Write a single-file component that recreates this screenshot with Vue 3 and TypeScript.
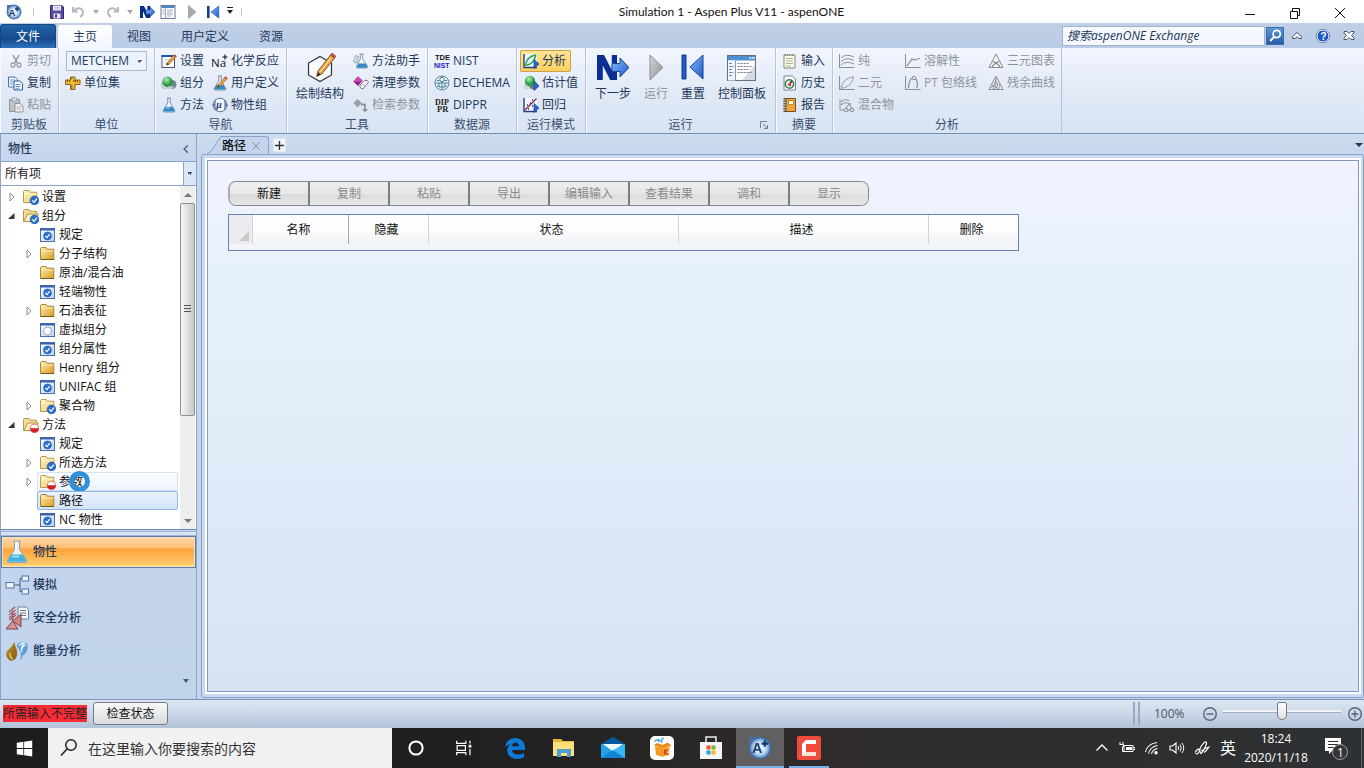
<script setup lang="ts">
import { ref } from 'vue'

interface Command { icon: string; label: string; disabled?: boolean; active?: boolean }
interface Group {
  id: string
  title: string
  large?: Command[]
  columns?: Command[][]
  units?: boolean
  launcher?: boolean
}
interface TreeNode { level: number; icon: string; label: string; arrow?: 'open' | 'closed'; state?: 'hover' | 'selected'; busy?: boolean }

const okMark = '<circle cx="11.5" cy="11.5" r="4.4" fill="#2a6fd0" stroke="#1a4fa0" stroke-width=".6"/><path d="M9.3 11.4l1.7 1.9 2.9-3.7" fill="none" stroke="#fff" stroke-width="1.3"/>'
const redMark = '<circle cx="11.5" cy="11.5" r="4.3" fill="#fff" stroke="#b33" stroke-width=".6"/><path d="M7.2 11.3h8.6a4.3 4.3 0 0 1-8.6 0z" fill="#d81e1e"/>'
const folderShape = '<path d="M.5 13.5v-11l.8-1H6l1.2 1.7h6.6v10.300z" fill="url(#gFolder)" stroke="#a07a2c" stroke-width=".9"/><path d="M1 5h12.500" stroke="#fff3c4" stroke-width=".8"/><path d="M1 13.500h13" stroke="#6d5520"/>'
const openFolder = '<path d="M.5 13.500v-11l.8-1H6l1.200 1.700h6.300v10z" fill="#f3dc93" stroke="#b08f45" stroke-width=".9"/><path d="M1 13.500L4.500 6h11L13 13.500z" fill="#fbeeb8" stroke="#b08f45" stroke-width=".9"/>'
const paleFolder = '<path d="M.5 13.500v-11l.8-1H6l1.200 1.700h6.600v10.300z" fill="url(#gPale)" stroke="#b08f45" stroke-width=".9"/><path d="M1 5h12.500" stroke="#fffbe0" stroke-width=".8"/>'
const sheet = '<rect x=".5" y="1.500" width="14" height="13" fill="url(#gSheet)" stroke="#4a70b0"/><path d="M0 2.500h15" stroke="#3a5fae" stroke-width="2"/>'
const aspen = '<path d="M1 1h7v7H1z" fill="#3e78b8"/><circle cx="8" cy="8" r="7" fill="url(#gAspen)" stroke="#3d6ea8" stroke-width="1"/><text x="2.6" y="11.6" font-family="Liberation Sans, sans-serif" font-size="9.5" font-weight="bold" fill="#143c72">A</text><path d="M9 5h4.4M11.2 2.8v4.4" stroke="#143c72" stroke-width="1.5"/>'
const flask = '<path d="M6 1h4M6.8 1v5L2.2 13.4q-.6 1.6 1 1.6h9.6q1.6 0 1-1.6L9.2 6V1" fill="#f3f8fc" stroke="#72879c" stroke-width=".9"/><path d="M4.7 9.8h6.6l2.2 3.8q.4 1-.8 1H3.3q-1.2 0-.8-1z" fill="#2f88c6"/><path d="M5 11h4" stroke="#9bd5f1"/>'
const pencil = '<path d="M6.3 9.8L13.4 1.6l2 1.7-7.2 8-2.7 1z" fill="#eda13b" stroke="#8d5622" stroke-width=".6"/><path d="M13.4 1.6l2 1.7-1 1.1-2-1.7z" fill="#c6534b"/><path d="M5.5 12.3l.8-2.5 1.9 1.5z" fill="#473525"/>'
const axes = '<path d="M.5 1v13.500H15.500" fill="none" stroke="#8b9097" stroke-width="1.1"/>'
const playMark = '<path d="M11 6.5l5 4.5-5 4.5z" fill="#2866d2" stroke="#173e93" stroke-width=".7"/>'
const nextShape = '<path d="M1 2h4l3.4 7V2h2.8v12h-4L4 7.2V14H1z" fill="#092d85"/><path d="M7 6h4.3V3.2L16 8l-4.7 4.8V10H7z" fill="url(#gBlue)" stroke="#194a9f" stroke-width=".6"/>'
const panelShape = '<rect x="1" y="1.5" width="14" height="13" fill="#fff" stroke="#697b91"/><path d="M1.5 3h13" stroke="#4e86c7" stroke-width="2"/><path d="M5.5 4v10" stroke="#9ba9bb"/><path d="M2.5 6h2M2.5 8h2M2.5 10h2M7 6h6M7 8h5M7 10h6M7 12h4" stroke="#718098" stroke-width=".7"/>'

const icons: Record<string, string> = {
  aspen, flask,
  next: nextShape,
  panel: panelShape,
  save: '<path d="M1.5 1.5h11l2 1.5v11.5h-13z" fill="#5946a0" stroke="#33277a"/><path d="M4 1.5h8v5H4z" fill="#fff"/><path d="M5 3.2h6M5 5h6" stroke="#8d88bd" stroke-width=".7"/><path d="M4.5 9.5h7v5h-7z" fill="#e5e3f1"/><path d="M6 10.5h2v3H6z" fill="#473984"/>',
  undo: '<path d="M3 3v4.500h4.500M3.500 7Q8 2.500 12 5.500q3 4-2 7.500" fill="none" stroke="#b1b8c3" stroke-width="2"/>',
  redo: '<path d="M13 3v4.500H8.500M12.500 7Q8 2.500 4 5.500q-3 4 2 7.500" fill="none" stroke="#b7bac0" stroke-width="2"/>',
  play: '<path d="M4.500 1.500l7.500 6.500-7.500 6.500z" fill="#a8abae" stroke="#888c90" stroke-width=".6"/>',
  reset: '<path d="M2 2h2.6v12H2z" fill="#123b9c"/><path d="M13.8 2v12L6 8z" fill="url(#gBlue)" stroke="#1b49a1" stroke-width=".6"/>',
  cut: '<path d="M5 2l4.3 8M11 2L6.7 10" stroke="#888c92" stroke-width="1.3"/><circle cx="5" cy="12" r="2" fill="none" stroke="#9b9fa5" stroke-width="1.3"/><circle cx="11" cy="12" r="2" fill="none" stroke="#9b9fa5" stroke-width="1.3"/>',
  copy: '<path d="M.5 2H7l2.500 2.500V12h-9z" fill="#eef5ff" stroke="#4b72aa"/><path d="M2 5h5M2 7h5M2 9h3" stroke="#5f89c1" stroke-width=".8"/><path d="M6 6h5.800L14.500 8.600V15H6z" fill="#f7fbff" stroke="#315c9b"/><path d="M7.500 9.500h5M7.500 11.500h5M7.500 13.300h4" stroke="#4775b8" stroke-width=".8"/>',
  paste: '<path d="M1.5 2.5h10v12h-10z" fill="#bfc2c6" stroke="#92969b"/><path d="M4 1h5v3H4z" fill="#e5e7e9" stroke="#8f9398" stroke-width=".8"/><path d="M7 6.5h5l3 2.6V15H7z" fill="#eceef0" stroke="#92969b"/><path d="M8.5 10h4.6M8.5 12h4.6" stroke="#a7abb0" stroke-width=".8"/>',
  units: '<path d="M.5 5h5V2h4.500v3h5v4.500h-5v5H5.500v-5h-5z" fill="#f1b933" stroke="#8b6721"/><path d="M2.500 5v2M4.500 5v2M10.500 5v2M12.500 5v2M5.500 11h2M5.500 13h2M5.500 3.500h2M8 6h2" stroke="#694811" stroke-width=".9"/>',
  setup: '<rect x="1" y="2.500" width="12.500" height="12" fill="#fff" stroke="#45536b"/><path d="M.5 3h13.500" stroke="#1a57a7" stroke-width="2"/><path d="M3.5 7h6M3.5 10h3" stroke="#a6b5c7"/>' + pencil,
  components: '<circle cx="11" cy="9.500" r="4.500" fill="#75838f"/><circle cx="4" cy="10" r="3.600" fill="#d7dce2" stroke="#8d98a2" stroke-width=".5"/><circle cx="6.500" cy="6.800" r="5.200" fill="url(#gGreen)"/><path d="M7.500 11q3.500-.5 5.500 1-2 3-6 2z" fill="#bcc6cf"/>',
  sodium: '<text x="-1" y="14" font-family="Open Sans, sans-serif" font-size="11.5" fill="#111">Na</text><path d="M13 1.500v5M10.500 4h5" stroke="#111" stroke-width="1.1"/>',
  custom: flask + pencil,
  props: '<circle cx="8" cy="8" r="6.800" fill="#f4f8fd" stroke="#53719d"/><path d="M3 3v10M0 8h3M13 3v10M13 8h3" stroke="#47689b" stroke-width="1.1"/><text x="4.3" y="11" font-family="Liberation Serif, serif" font-style="italic" font-weight="bold" font-size="10" fill="#263f73">μ</text>',
  draw: '<path d="M16 4.500l11.500 6.500v12L16 29.500 4.500 23V11z" fill="#fafcff" stroke="#2e3136" stroke-width="1.2"/><path d="M14 19L26.5 3l4 3-12.8 16-5 2.4z" fill="#f2a846" stroke="#7a512e"/><path d="M26.5 3l1.7-1.8 3.5 2.8L30.5 6z" fill="#cf5a4a" stroke="#9b4038"/><path d="M12.7 24.4l1.3-4.2 2.8 2.2z" fill="#38312a"/><path d="M16 20L27 6" stroke="#ffe1a0" stroke-width="1.2"/>',
  assistant: '<path d="M.5 9L2.500 2.500l3 1-1.500 6.500z" fill="#d7dde4" stroke="#8994a4" stroke-width=".7"/><path d="M6.500 1h4M7.300 1v5L3.500 13q-.5 2 1 2h9q1.500 0 1-2L9.700 6V1" fill="#edf5fb" stroke="#70849b" stroke-width=".8"/><path d="M5.400 10.500h7.300l1.300 3q.2 1.200-1 1.200H5q-1.200 0-.9-1.200z" fill="#318ac4"/>',
  clean: '<path d="M.3 6.500L5 1.500l4.500 4-4.500 5.500z" fill="#8c1b80"/><path d="M5 1.500L9.500 5.500 5 7 .3 6.500z" fill="#cf4ab8"/><path d="M7 10l4.7-4.6q3-.8 3.8 2L10.400 13.500q-3.800 1-3.400-3.500z" fill="#f5f5fa" stroke="#74678f" stroke-width=".9"/><path d="M8.6 8.4l3.2 3" stroke="#87799c" stroke-width=".7"/>',
  retrieve: '<path d="M.5 6L4.500 2l4.500 4-4.500 4.500z" fill="#9da0a4"/><path d="M8 7.500h4v5" fill="none" stroke="#909398" stroke-width="1.8"/><path d="M9 12h6L12 15.500z" fill="#909398"/>',
  nist: '<text x="1" y="7" font-family="Liberation Sans, sans-serif" font-size="7.500" font-weight="bold" fill="#161616">TDE</text><text x="0" y="14.500" font-family="Liberation Sans, sans-serif" font-size="6.700" font-weight="bold" fill="#1717c5">NIST</text>',
  dechema: '<circle cx="8" cy="8" r="7" fill="#edf5fa" stroke="#467d9b"/><circle cx="8" cy="4.5" r="2.2" fill="none" stroke="#467d9b"/><path d="M2 8h12M5 8v4h6V8M2.7 5.5h3M10.3 5.5h3M3 11h2M11 11h2M8 7v7" fill="none" stroke="#467d9b"/>',
  dippr: '<text x="1" y="7.5" font-family="Liberation Serif, serif" font-size="8" font-weight="bold" fill="#222">DIP</text><text x="3" y="15" font-family="Liberation Serif, serif" font-size="8.5" font-weight="bold" fill="#222">PR</text>',
  analysis: '<rect x="1" y="1" width="13" height="13" fill="#eef6fb"/><path d="M1 1v13.500H14" fill="none" stroke="#293f82" stroke-width="1.4"/><path d="M2.500 12.500Q4 3 13 2M2.500 12.500q8-1 10.500-10.500" fill="none" stroke="#2ba64a" stroke-width="1.4"/>' + playMark,
  estimate: '<circle cx="4.500" cy="11" r="3.600" fill="#cdd3d9"/><circle cx="10.500" cy="10.500" r="4" fill="#6c7d87"/><circle cx="7" cy="6" r="5.200" fill="url(#gGreen)"/>' + playMark,
  regression: '<rect x="1" y="1" width="13" height="13" fill="#f4f6fb"/><path d="M1 1v13.500H14" fill="none" stroke="#293f82" stroke-width="1.4"/><path d="M2 13L13.500 1.500" stroke="#7b245c" stroke-width="1.3"/><path d="M4 8h1M7 6h1M9 3h1M5 12h1M9 9h1" stroke="#2d2450" stroke-width="1.4"/>' + playMark,
  bigNext: '<path d="M0 3h7l7.8 15V3H20v25h-6.8L5.8 13.5V28H0z" fill="#082f91"/><path d="M15 11.5h8V6l9 9.5-9 9.5v-5.5h-8z" fill="url(#gBlue)" stroke="#1c4b9c"/>',
  bigPlay: '<path d="M10 3l13 12.5L10 28z" fill="url(#gGray)" stroke="#8b8f93"/>',
  bigReset: '<path d="M5 3h4v24H5z" fill="#2159c8" stroke="#123b91"/><path d="M26 3v24L13 15z" fill="url(#gBlue)" stroke="#163f99"/>',
  bigPanel: '<rect x="1.500" y="3.500" width="28" height="25" fill="#fff" stroke="#66717f"/><path d="M2 4h27v4.500H2z" fill="#4d8fd3"/><path d="M23 6h1.500M25.500 6H27M27.500 6H29" stroke="#fff" stroke-width="1.500"/><path d="M2 8.500h7v20H2z" fill="#eef5fc"/><path d="M9.5 8.500v20" stroke="#8e9bab"/><path d="M29 13v15H16z" fill="#d5dae1"/><path d="M3.500 11.500h3M3.500 14.500h4M3.500 17.500h2M3.500 20.500h4M3.500 23.500h3" stroke="#2d6099" stroke-dasharray="2 1"/><path d="M11.500 11.500h12M11.500 14.500h15M11.500 17.500h12M11.500 20.500h14" stroke="#727d8b" stroke-dasharray="2 1"/>',
  input: '<path d="M2 2h11v13H2z" fill="#fffef0" stroke="#7d8b70"/><path d="M3 1v2M5.5 1v2M8 1v2M10.5 1v2" stroke="#6e886f"/><path d="M4 5.5h7M4 8h7M4 10.5h7M4 13h5" stroke="#9baa85" stroke-width=".9"/>',
  history: '<path d="M2 1h8.500l3 3v11H2z" fill="#fff" stroke="#748297"/><circle cx="7.500" cy="9" r="4.200" fill="#e7eee8" stroke="#35864e" stroke-width="1.6"/><path d="M7.500 9l2.500-3" fill="none" stroke="#222" stroke-width="1.300"/><path d="M6 9.500L8.500 8v3z" fill="#d63a2a" stroke="#d63a2a"/>',
  report: '<path d="M2 1.500h11.500v13H2z" fill="#f1a434" stroke="#755026"/><path d="M1.500 1.500h3v13h-3z" fill="#58544f"/><path d="M1 3h2.500M1 5.500h2.500M1 8h2.500M1 10.500h2.500M1 13h2.500" stroke="#f2f2f2"/><path d="M6.5 3.5h5v4h-5z" fill="#fff7db" stroke="#986520" stroke-width=".6"/>',
  pure: axes + '<path d="M2 5q5-5 13-1M2 8.500q5-5 13-1M2 12q5-5 13-1" fill="none" stroke="#8b9097"/>',
  binary: axes + '<path d="M2 13.500Q3 4 14.500 1.500 13 12 2 13.500z" fill="none" stroke="#999da2"/>',
  mixture: '<path d="M1 2v11h4M2 5q4-4 8-1M2 8q4-4 8-1" fill="none" stroke="#999da2" stroke-width="1.1"/><circle cx="7" cy="13" r="1.8" fill="none" stroke="#85898e"/><circle cx="13" cy="13" r="1.8" fill="none" stroke="#85898e"/><path d="M7 11L11 6v3l2 2M9 13h2" fill="none" stroke="#85898e"/>',
  solubility: axes + '<path d="M2 13l5-7q2 .5 3 1 2-1.500 5-1.500" fill="none" stroke="#85898e" stroke-width="1.2"/>',
  envelope: axes + '<path d="M3.500 13Q4 3 8.500 2.500 13.500 3.500 12 13" fill="none" stroke="#858d87" stroke-width="1.2"/><circle cx="9" cy="3" r="1.7" fill="#eef2f8" stroke="#858d87"/>',
  ternary: '<path d="M8 1L15 14.5H1z" fill="#f1f3f5" stroke="#898e94"/><path d="M4.8 8.5q3 2 6.4 0M4 14q4-7 8 0" fill="none" stroke="#7c8281" stroke-width="1.2"/>',
  residue: '<path d="M8 1L15 14.5H1z" fill="#f1f3f5" stroke="#898e94"/><path d="M3 13q4-2 5-10M5 14q4-4 3-9M7 14q4-4 2-7M10 14q3-2 1-5M4 10l7 4" fill="none" stroke="#898e94"/>',
  folder: folderShape,
  folderOk: paleFolder + okMark,
  openOk: openFolder + okMark,
  openMissing: openFolder + redMark,
  folderMissing: paleFolder + redMark,
  sheetOk: sheet + '<circle cx="7.500" cy="8.900" r="4" fill="#2972cf" stroke="#1d539f" stroke-width=".5"/><path d="M5.400 8.800l1.600 1.800 2.700-3.400" fill="none" stroke="#fff" stroke-width="1.2"/>',
  sheetEmpty: sheet + '<circle cx="7.500" cy="9" r="4" fill="#fff" stroke="#9aa8ba"/>',
  search: '<circle cx="9.7" cy="6" r="3.6" fill="none" stroke="#fff" stroke-width="1.7"/><path d="M7 8.8L3.2 13" stroke="#fff" stroke-width="2"/>',
  help: '<circle cx="8" cy="8" r="6" fill="#1959c8" stroke="#fff"/><circle cx="8" cy="8" r="6.8" fill="none" stroke="#526c9b" stroke-width=".7"/><text x="5.3" y="12" font-family="Liberation Sans, sans-serif" font-size="10.5" font-weight="bold" fill="#fff">?</text>',
  closeDoc: '<path d="M3 3.500h3L8 5.500l2-2h3V5l-2.500 2.500L13 10v1.500h-3l-2-2-2 2H3V10l2.500-2.500L3 5z" fill="#fff" stroke="#46536a"/>',
  collapse: '<path d="M3.5 10.5V8.7L8 4.5l4.5 4.2v1.8H10L8 8.8l-2 1.7z" fill="#fff" stroke="#46536a"/>',
  navProps: '<path d="M8 1h8M9.5 1.5v8L2.5 20q-1 2.5 1.3 2.5h16.4q2.3 0 1.3-2.5l-7-10.5v-8" fill="#e9f1f6" stroke="#92a1ab"/><path d="M6.4 14.5h11.2l3.2 5.3q.8 2-1.2 2H4.4q-2 0-1.2-2z" fill="#42b4dc"/><path d="M7 16.5h7" stroke="#b8edfb" stroke-width="1.4"/><path d="M11 3v8" stroke="#fff" stroke-width="1.4"/>',
  navSim: '<path d="M9 12h6M18 5.500h-3v13h3" fill="none" stroke="#47617e"/><rect x="1" y="9.500" width="8" height="5.500" fill="#eef3fd" stroke="#56779f"/><rect x="17" y="3" width="6.500" height="5" fill="#eef3fd" stroke="#56779f"/><rect x="17" y="16" width="6.500" height="5" fill="#eef3fd" stroke="#56779f"/>',
  navSafety: '<path d="M13 1h8l2.5 2.5V13H13z" fill="#f3f7fb" stroke="#718095"/><path d="M15 4.5h6M15 7h6M15 9.5h6" stroke="#64758c"/><path d="M7.500 15L16 8v13z" fill="#ce8585" stroke="#85474c"/><path d="M7.500 15L13 23H1z" fill="#d29496" stroke="#85474c"/><path d="M7.500 15V5M4 9l6.500-5M4 12l6.500-5M4 6l6-5M4.500 14l6.500-5" stroke="#a35055" stroke-width="1.2"/>',
  navEnergy: '<path d="M9.500 3q.5 4 2 7 1.500 5-.5 9-3 4-7 2-5-4-1.500-9.500Q7 8 9.500 3z" fill="url(#gGold)"/><path d="M5 14q0 5 3 6" fill="none" stroke="#eed075" stroke-width="1.300"/><path d="M12 7q0-4 5-4 5 0 5.500 3 1 7-5 11 0 3-2.500 4 2-5 0-9-2-3-3-5z" fill="#5c9ed5"/><path d="M14 7q1-3 5-3-4 5-2 9M17 10q1-4 4-4" fill="none" stroke="#d9f2ff" stroke-width="1.400"/>',
  windows: '<path d="M1 3.500L9.500 2.300V10.500H1zM10.500 2.200L21 .7v9.800H10.500zM1 11.500h8.500v8.200L1 18.500zM10.500 11.500H21v9.800l-10.500-1.500z" fill="#fff"/>',
  lens: '<circle cx="14" cy="8" r="5.200" fill="none" stroke="#222" stroke-width="1.500"/><path d="M10 12l-6 6.500" stroke="#222" stroke-width="1.600"/>',
  cortana: '<circle cx="12" cy="12" r="7.200" fill="none" stroke="#fff" stroke-width="2.200"/>',
  taskview: '<path d="M4 4v3h10V4M4 20v-3h10v3M4.500 9.500h9v5h-9zM18.500 4v3M18.500 13v7" fill="none" stroke="#fff" stroke-width="1.300"/><path d="M17 8.500h3v3h-3z" fill="#fff"/>',
  edge: '<path d="M2 11Q4 2 12 2q9.500.5 10 9.800V14H9q.5 4.500 6 4.600 3.500 0 6-1.500v4.200Q18 23 13.500 23 4.500 22 4 14q.5-4 4-6-3 .5-6 3zM9 10.300h7q-.1-3.700-3.300-3.700T9 10.300z" fill="#0b7ad8"/>',
  explorer: '<path d="M1 3h8l2 2h11v15H1z" fill="#e7b53a"/><path d="M1 6h21v14H1z" fill="#ffdf7b"/><path d="M5 13h14v8h-4v-4H9v4H5z" fill="#4c9fce"/>',
  mail: '<path d="M0 8l12-7 12 7z" fill="#0759a0"/><path d="M0 8h24v14H0z" fill="#23a2e8"/><path d="M2 8h20l-10 7.500z" fill="#f3f8fc"/><path d="M0 22l12-8 12 8z" fill="#1285d2"/><path d="M24 8v14l-12-8z" fill="#39b6f5"/>',
  box: '<rect width="24" height="24" rx="5" fill="#fff"/><path d="M5 10l8 1.500V21l-7-2z" fill="#f39a21"/><path d="M13 11.500l7-1.500-1 9-6 2z" fill="#fbb448"/><path d="M3.500 9l4-2 5 2 5-2.500 4 3-8.500 2.500z" fill="#ee8b18"/><path d="M14.500 13v6M18 13l-3 3 3 3" fill="none" stroke="#d93f20" stroke-width="1.500"/><path d="M9 5.500q-2-3-4.500 0M12 7q-2-3 1.500-5M10 5.500L8 3" fill="none" stroke="#4aa8de" stroke-width="1.500"/>',
  store: '<path d="M7 7V1h10v6" fill="none" stroke="#eee" stroke-width="1.500"/><path d="M1 6h22v17H1z" fill="#f5f5f5"/><path d="M7.500 9.500h4v4h-4z" fill="#e9502b"/><path d="M12.500 9.500h4v4h-4z" fill="#7eb51f"/><path d="M7.500 14.500h4v4h-4z" fill="#1aa4df"/><path d="M12.500 14.500h4v4h-4z" fill="#f5b51d"/>',
  camtasia: '<rect width="24" height="24" rx="2" fill="#f04c3e"/><path d="M19 4H9L5 8v12h14v-4H9V8h10z" fill="#fff"/><path d="M19 16v4H5l4-4z" fill="#ffe0d9"/>',
  chevron: '<path d="M2.500 10.500L8 5l5.500 5.500" fill="none" stroke="#fff" stroke-width="1.300"/>',
  battery: '<path d="M5 5.500h9v6H5zM14.500 7.500h1.500v2h-1.500" fill="none" stroke="#fff"/><path d="M7 7h6v3H7z" fill="#fff"/><path d="M1 2v2M4 2v2M.5 4.500h4v2h-1v5h3" fill="none" stroke="#fff"/>',
  wifi: '<g fill="none" stroke="#fff" stroke-width="1.100"><path d="M1.500 12Q3 4 13 2.500"/><path d="M4.500 13.500Q6 7 13.500 5.500"/><path d="M7.500 14q1-4.500 6-5.500"/></g><circle cx="12" cy="12.800" r="1.700" fill="#fff"/>',
  speaker: '<path d="M1 6h2.500L7 3v10L3.500 10H1z" fill="none" stroke="#fff" stroke-width="1.100"/><path d="M9 6q1.300 2 0 4M11 4.500q2.500 3.500 0 7M13 3q3.500 5 0 10" fill="none" stroke="#fff"/>',
  pen: '<path d="M7 13.500Q4 10.500 8 5q4-5 4.500-2 0 3-5.500 11M1 12.500q3-5 4.500-2.500-1 5-4 3.500M7.500 11q3.500-3 7.500-4-2.500 4-5 5.500" fill="none" stroke="#fff" stroke-width="1.200"/>',
}

const quick = [
  { icon: 'save', name: '保存', cls: 'w22' },
  { icon: 'undo', name: '撤消', cls: 'w20' },
  { icon: 'caret', name: '撤消列表', cls: 'w16' },
  { icon: 'redo', name: '重做', cls: 'w18' },
  { icon: 'caret', name: '重做列表', cls: 'w16' },
  { icon: 'next', name: '下一步', cls: 'w18' },
  { icon: 'panel', name: '控制面板', cls: 'w24' },
  { icon: 'play', name: '运行', cls: 'w24' },
  { icon: 'reset', name: '重置', cls: 'w18' },
  { icon: 'more', name: '自定义', cls: 'w16' },
]
const tabs = ['主页', '视图', '用户定义', '资源']

const groups: Group[] = [
  { id: 'clipboard', title: '剪贴板', columns: [[{ icon: 'cut', label: '剪切', disabled: true }, { icon: 'copy', label: '复制' }, { icon: 'paste', label: '粘贴', disabled: true }]] },
  { id: 'units', title: '单位', units: true },
  { id: 'navigate', title: '导航', columns: [
    [{ icon: 'setup', label: '设置' }, { icon: 'components', label: '组分' }, { icon: 'flask', label: '方法' }],
    [{ icon: 'sodium', label: '化学反应' }, { icon: 'custom', label: '用户定义' }, { icon: 'props', label: '物性组' }]] },
  { id: 'tools', title: '工具', large: [{ icon: 'draw', label: '绘制结构' }], columns: [
    [{ icon: 'assistant', label: '方法助手' }, { icon: 'clean', label: '清理参数' }, { icon: 'retrieve', label: '检索参数', disabled: true }]] },
  { id: 'source', title: '数据源', columns: [[{ icon: 'nist', label: 'NIST' }, { icon: 'dechema', label: 'DECHEMA' }, { icon: 'dippr', label: 'DIPPR' }]] },
  { id: 'mode', title: '运行模式', columns: [[{ icon: 'analysis', label: '分析', active: true }, { icon: 'estimate', label: '估计值' }, { icon: 'regression', label: '回归' }]] },
  { id: 'run', title: '运行', launcher: true, large: [{ icon: 'bigNext', label: '下一步' }, { icon: 'bigPlay', label: '运行', disabled: true }, { icon: 'bigReset', label: '重置' }, { icon: 'bigPanel', label: '控制面板' }] },
  { id: 'summary', title: '摘要', columns: [[{ icon: 'input', label: '输入' }, { icon: 'history', label: '历史' }, { icon: 'report', label: '报告' }]] },
  { id: 'analyze', title: '分析', columns: [
    [{ icon: 'pure', label: '纯', disabled: true }, { icon: 'binary', label: '二元', disabled: true }, { icon: 'mixture', label: '混合物', disabled: true }],
    [{ icon: 'solubility', label: '溶解性', disabled: true }, { icon: 'envelope', label: 'PT 包络线', disabled: true }],
    [{ icon: 'ternary', label: '三元图表', disabled: true }, { icon: 'residue', label: '残余曲线', disabled: true }]] },
]

const tree: TreeNode[] = [
  { level: 0, icon: 'folderOk', label: '设置', arrow: 'closed' },
  { level: 0, icon: 'openOk', label: '组分', arrow: 'open' },
  { level: 1, icon: 'sheetOk', label: '规定' },
  { level: 1, icon: 'folder', label: '分子结构', arrow: 'closed' },
  { level: 1, icon: 'folder', label: '原油/混合油' },
  { level: 1, icon: 'sheetOk', label: '轻端物性' },
  { level: 1, icon: 'folder', label: '石油表征', arrow: 'closed' },
  { level: 1, icon: 'sheetEmpty', label: '虚拟组分' },
  { level: 1, icon: 'sheetOk', label: '组分属性' },
  { level: 1, icon: 'folder', label: 'Henry 组分' },
  { level: 1, icon: 'sheetOk', label: 'UNIFAC 组' },
  { level: 1, icon: 'folderOk', label: '聚合物', arrow: 'closed' },
  { level: 0, icon: 'openMissing', label: '方法', arrow: 'open' },
  { level: 1, icon: 'sheetOk', label: '规定' },
  { level: 1, icon: 'folderOk', label: '所选方法', arrow: 'closed' },
  { level: 1, icon: 'folderMissing', label: '参数', arrow: 'closed', state: 'hover', busy: true },
  { level: 1, icon: 'folder', label: '路径', state: 'selected' },
  { level: 1, icon: 'sheetOk', label: 'NC 物性' },
]

const environments = [
  { icon: 'navProps', label: '物性', active: true },
  { icon: 'navSim', label: '模拟' },
  { icon: 'navSafety', label: '安全分析' },
  { icon: 'navEnergy', label: '能量分析' },
]
const actions = ['新建', '复制', '粘贴', '导出', '编辑输入', '查看结果', '调和', '显示']
const apps = [
  { icon: 'edge', name: 'Edge' }, { icon: 'explorer', name: '文件资源管理器' }, { icon: 'mail', name: '邮件' },
  { icon: 'box', name: '软件' }, { icon: 'store', name: '应用商店' },
  { icon: 'aspen', name: 'Aspen Plus', state: 'current' }, { icon: 'camtasia', name: '录屏', state: 'open' },
]
const unitSet = ref('METCHEM')
const zoom = ref(50)
</script>

<template>
  <div class="window">
    <svg class="defs" aria-hidden="true">
      <defs>
        <linearGradient id="gFolder" x1="0" y1="0" x2="1" y2="1"><stop offset="0" stop-color="#fff0b0" /><stop offset="1" stop-color="#d99c22" /></linearGradient>
        <linearGradient id="gPale" x1="0" y1="0" x2="1" y2="1"><stop offset="0" stop-color="#fff5c2" /><stop offset="1" stop-color="#ecc970" /></linearGradient>
        <linearGradient id="gSheet" x1="0" y1="0" x2="1" y2="1"><stop offset="0" stop-color="#ffffff" /><stop offset="1" stop-color="#b9d0ef" /></linearGradient>
        <linearGradient id="gBlue" x1="0" y1="0" x2="1" y2="1"><stop offset="0" stop-color="#86c0fa" /><stop offset="1" stop-color="#1d55c9" /></linearGradient>
        <linearGradient id="gGray" x1="0" y1="0" x2="1" y2="1"><stop offset="0" stop-color="#d3d5d8" /><stop offset="1" stop-color="#919599" /></linearGradient>
        <linearGradient id="gGold" x1="0" y1="0" x2="1" y2="1"><stop offset="0" stop-color="#c79b34" /><stop offset="1" stop-color="#7b5410" /></linearGradient>
        <radialGradient id="gGreen" cx=".4" cy=".3"><stop offset="0" stop-color="#aef0ae" /><stop offset="1" stop-color="#279a44" /></radialGradient>
        <radialGradient id="gAspen"><stop offset="0" stop-color="#ffffff" /><stop offset=".55" stop-color="#c9ddf1" /><stop offset="1" stop-color="#4e84c0" /></radialGradient>
      </defs>
    </svg>

    <header class="titlebar">
      <div class="quick">
        <svg class="i16 logo" viewBox="0 0 16 16" v-html="icons.aspen" />
        <i class="qsep" />
        <button v-for="q in quick" :key="q.name" :class="q.cls" :aria-label="q.name">
          <i v-if="q.icon === 'caret'" class="caret pale" />
          <i v-else-if="q.icon === 'more'" class="caret more" />
          <svg v-else class="i16" viewBox="0 0 16 16" v-html="icons[q.icon]" />
        </button>
        <i class="qsep last" />
      </div>
      <h1>Simulation 1 - Aspen Plus V11 - aspenONE</h1>
      <div class="winctl">
        <button aria-label="最小化"><svg viewBox="0 0 12 12"><path d="M1 7.500h10" /></svg></button>
        <button aria-label="还原"><svg viewBox="0 0 12 12"><path d="M1.500 4.500h7v7h-7zM3.500 4.500v-3h7v7h-2" /></svg></button>
        <button aria-label="关闭"><svg viewBox="0 0 12 12"><path d="M1 1l10 10M11 1L1 11" /></svg></button>
      </div>
    </header>

    <nav class="tabs">
      <button class="file">文件</button>
      <button v-for="(t, i) in tabs" :key="t" :class="['tab', { on: i === 0 }]">{{ t }}</button>
      <div class="exchange">
        <input type="text" aria-label="搜索aspenONE Exchange" placeholder="搜索aspenONE Exchange">
        <button class="go" aria-label="搜索"><svg class="i16" viewBox="0 0 16 16" v-html="icons.search" /></button>
        <button class="plain" aria-label="折叠功能区"><svg class="i16" viewBox="0 0 16 16" v-html="icons.collapse" /></button>
        <button class="plain" aria-label="帮助"><svg class="i16" viewBox="0 0 16 16" v-html="icons.help" /></button>
        <button class="plain" aria-label="关闭文档"><svg class="i16" viewBox="0 0 16 16" v-html="icons.closeDoc" /></button>
      </div>
    </nav>

    <section class="ribbon">
      <div v-for="g in groups" :key="g.id" :class="['group', g.id]">
        <div class="gbody">
          <button v-for="c in g.large" :key="c.label" class="large" :disabled="c.disabled">
            <svg viewBox="0 0 32 32" v-html="icons[c.icon]" />
            <span>{{ c.label }}</span>
          </button>
          <div v-if="g.units" class="unitcol">
            <select v-model="unitSet" aria-label="单位集"><option>METCHEM</option></select>
            <button class="cmd"><svg class="i16" viewBox="0 0 16 16" v-html="icons.units" />单位集</button>
          </div>
          <div v-for="(col, ci) in g.columns" :key="ci" class="col">
            <button v-for="c in col" :key="c.label" :class="['cmd', { active: c.active }]" :disabled="c.disabled">
              <svg class="i16" viewBox="0 0 16 16" v-html="icons[c.icon]" />{{ c.label }}
            </button>
          </div>
        </div>
        <div class="gtitle">
          <span>{{ g.title }}</span>
          <button v-if="g.launcher" class="launcher" aria-label="运行设置"><svg viewBox="0 0 8 8"><path d="M.5 7V.5H7M3 3l4 4M7.500 4v3.500H4" /></svg></button>
        </div>
      </div>
    </section>

    <main class="main">
      <aside class="side">
        <div class="sidehead"><h2>物性</h2><button aria-label="折叠"><svg viewBox="0 0 8 8"><path d="M5.500 1l-3 3 3 3" /></svg></button></div>
        <select class="filter" aria-label="筛选"><option>所有项</option></select>
        <div class="treebox">
          <ul class="tree">
            <li v-for="(n, i) in tree" :key="i" :class="'level' + n.level">
              <span class="arrow">
                <svg v-if="n.arrow === 'closed'" viewBox="0 0 10 10"><path d="M3 1l4 4-4 4z" fill="#fff" stroke="#8d8d8d" /></svg>
                <svg v-else-if="n.arrow === 'open'" viewBox="0 0 10 10"><path d="M7.500 2v6H1z" fill="#333" /></svg>
              </span>
              <a href="#" :class="['node', n.state]">
                <svg class="i16" viewBox="0 0 16 16" v-html="icons[n.icon]" />{{ n.label }}
                <span v-if="n.busy" class="busy" />
              </a>
            </li>
          </ul>
          <div class="scroll">
            <span class="sbtn"><i class="up" /></span>
            <span class="thumb"><i /></span>
            <span class="rest" />
            <span class="sbtn"><i class="caret gray" /></span>
          </div>
        </div>
        <div class="splitter" />
        <nav class="envs">
          <button v-for="e in environments" :key="e.label" :class="{ on: e.active }">
            <svg viewBox="0 0 24 24" v-html="icons[e.icon]" />{{ e.label }}
          </button>
          <div class="envmore"><i class="caret" /></div>
        </nav>
      </aside>

      <section class="work">
        <div class="doctabs">
          <svg class="slant" viewBox="0 0 14 18"><path d="M0 18Q4 17 7 11T14 .5V18z" fill="#c3d4ec" /><path d="M0 17.500Q4 16.500 7 11T14 .5" fill="none" stroke="#8ba2c6" /></svg>
          <div class="doctab">路径<button aria-label="关闭"><svg viewBox="0 0 8 8"><path d="M.5.5l7 7M7.500.5l-7 7" /></svg></button></div>
          <button class="plus" aria-label="新选项卡"><svg viewBox="0 0 12 12"><path d="M6 1v10M1 6h10" /></svg></button>
          <i class="caret dark end" />
        </div>
        <div class="frame">
          <div class="page">
            <div class="actions">
              <button v-for="(a, i) in actions" :key="a" :disabled="i > 0">{{ a }}</button>
            </div>
            <table>
              <colgroup><col class="c0"><col class="c1"><col class="c2"><col class="c3"><col class="c3"><col class="c4"></colgroup>
              <thead><tr><th class="corner"><i /></th><th>名称</th><th>隐藏</th><th>状态</th><th>描述</th><th>删除</th></tr></thead>
              <tbody><tr><td colspan="6" /></tr></tbody>
            </table>
          </div>
        </div>
      </section>
    </main>

    <footer class="status">
      <span class="warn">所需输入不完整</span>
      <button class="check">检查状态</button>
      <span class="grip" />
      <span class="pct">100%</span>
      <button class="zb" aria-label="缩小"><svg viewBox="0 0 16 16"><circle cx="8" cy="8" r="6.300" /><path d="M4.500 8h7" /></svg></button>
      <input v-model="zoom" class="zoom" type="range" min="0" max="100" aria-label="缩放">
      <button class="zb" aria-label="放大"><svg viewBox="0 0 16 16"><circle cx="8" cy="8" r="6.300" /><path d="M4.500 8h7M8 4.500v7" /></svg></button>
    </footer>

    <footer class="taskbar">
      <button class="start" aria-label="开始"><svg viewBox="0 0 22 22" v-html="icons.windows" /></button>
      <label class="find"><svg viewBox="0 0 22 22" v-html="icons.lens" /><input type="text" placeholder="在这里输入你要搜索的内容"></label>
      <button class="sys" aria-label="Cortana"><svg viewBox="0 0 24 24" v-html="icons.cortana" /></button>
      <button class="sys" aria-label="任务视图"><svg viewBox="0 0 24 24" v-html="icons.taskview" /></button>
      <div class="apps">
        <button v-for="a in apps" :key="a.name" :class="a.state" :aria-label="a.name"><svg :viewBox="a.icon === 'aspen' ? '0 0 16 16' : '0 0 24 24'" v-html="icons[a.icon]" /></button>
      </div>
      <div class="tray">
        <button v-for="t in ['chevron', 'battery', 'wifi', 'speaker', 'pen']" :key="t" :aria-label="t"><svg viewBox="0 0 16 16" v-html="icons[t]" /></button>
        <button class="ime">英</button>
        <div class="time"><span>18:24</span><span>2020/11/18</span></div>
        <button class="note" aria-label="通知"><svg viewBox="0 0 26 26"><path d="M2 3h16v13H9l-3 3v-3H2z" fill="#fff" /><path d="M5 6.500h10M5 9.500h10M5 12.500h6" stroke="#2b2c2e" /><circle cx="17" cy="17" r="7.500" fill="#333537" stroke="#9a9b9c" /><text x="14" y="21.500" font-size="12" fill="#fff">1</text></svg></button>
      </div>
    </footer>
  </div>
</template>

<style>
body { margin: 0; }
</style>

<style scoped>
.window {
  display: flex;
  flex-direction: column;
  min-height: 100vh;
  background: #c5d5ec;
  color: #1e395b;
  font: 12px/16px "Open Sans", "Noto Sans CJK SC", sans-serif;
  overflow: hidden;
}
.window * { box-sizing: border-box; }
.defs { position: absolute; width: 0; height: 0; }
button, select, input { font: inherit; color: inherit; margin: 0; padding: 0; border: 0; background: none; border-radius: 0; }
button { display: flex; align-items: center; justify-content: center; white-space: nowrap; }
svg { display: block; flex: none; }
.i16 { width: 16px; height: 16px; }
.caret { display: block; width: 0; height: 0; border: 3px solid transparent; border-top: 4px solid #4a5d7c; border-bottom: 0; }
.caret.pale { border-top-color: #a3a6ab; }
.caret.dark { border-width: 4px 4px 0; border-top-color: #223a60; }
.caret.gray { border-width: 4px 4px 0; border-top-color: #777; }
.caret.more { position: relative; border-top-color: #222; }
.caret.more::before { content: ""; position: absolute; left: -3px; top: -7px; width: 6px; height: 1px; background: #222; }

.titlebar { display: flex; height: 23px; background: #fff; color: #111; }
.quick { display: flex; align-items: center; }
.logo { margin: 0 6px; }
.qsep { width: 1px; height: 8px; margin: 0 12px 0 5px; background: #c2c2c2; }
.qsep.last { margin: 0 0 0 3px; }
.w16 { width: 16px; } .w18 { width: 18px; } .w20 { width: 20px; } .w22 { width: 22px; } .w24 { width: 24px; }
.titlebar h1 { flex: 1; margin: 0; padding-right: 6px; font-family: Lato, sans-serif; font-size: 12px; font-weight: 400; line-height: 23px; text-align: center; }
.winctl { display: flex; padding: 3px 2px 0 0; }
.winctl button { width: 45px; }
.winctl svg { width: 12px; height: 12px; fill: none; stroke: #111; }

.tabs { display: flex; align-items: flex-end; height: 25px; background: linear-gradient(#c0cfe6, #bacce6); }
.tabs .file { width: 56px; height: 24px; margin-right: 2px; color: #fff; border-radius: 3px 3px 0 0; border: 1px solid #164785; border-bottom: 0; background: linear-gradient(#2263a9, #164a8b 60%, #2c73bd); }
.tab { height: 23px; padding: 0 15px; }
.tab.on { background: linear-gradient(#fff, #f2f6fd); border-radius: 3px 3px 0 0; }
.exchange { display: flex; align-items: center; height: 25px; margin-left: auto; padding-right: 2px; }
.exchange input { width: 203px; height: 20px; padding: 0 4px; border: 1px solid #a2b3cb; background: #f5f8fe; font-style: italic; }
.exchange input::placeholder { color: #1e395b; opacity: 1; }
.go { width: 18px; height: 18px; margin-left: 1px; background: linear-gradient(#6097d4, #245ca8); border: 1px solid #3a6cab; }
.plain { width: 26px; height: 20px; }

.ribbon { display: flex; height: 86px; border-bottom: 1px solid #6a8fb9; background: linear-gradient(#f1f5fe, #e1e9f6 55%, #d8e3f3); }
.group { display: flex; flex-direction: column; flex: none; border-right: 1px solid #b5c6dc; box-shadow: inset 1px 0 #f7faff; padding-top: 2px; }
.gbody { display: flex; height: 66px; }
.gtitle { display: flex; align-items: center; justify-content: center; height: 17px; position: relative; color: #3a5070; }
.col { display: flex; flex-direction: column; align-items: flex-start; }
.cmd { height: 22px; padding: 0 3px; gap: 3px; border: 0; }
.cmd.active { padding-right: 5px; background: linear-gradient(#ffe695, #fbcf5b); box-shadow: inset 0 0 0 1px #c9a04b; border-radius: 2px; }
.cmd:disabled, .large:disabled { color: #8e949c; }
.large { flex-direction: column; justify-content: flex-start; padding-top: 2px; gap: 2px; }
.large svg { width: 32px; height: 32px; margin: 0 -4px; }
.clipboard { width: 59px; } .clipboard .gbody { padding-left: 5px; }
.units { width: 96px; } .units .gbody { padding-left: 3px; }
.navigate { width: 132px; } .navigate .gbody { padding-left: 3px; gap: 2px; }
.tools { width: 141px; } .tools .gbody { padding-left: 9px; gap: 6px; }
.source { width: 89px; } .source .gbody { padding-left: 3px; }
.mode { width: 69px; } .mode .gbody { padding-left: 3px; }
.run { width: 190px; } .run .gbody { padding-left: 9px; gap: 13px; }
.summary { width: 57px; } .summary .gbody { padding-left: 3px; }
.analyze { width: 229px; } .analyze .gbody { padding-left: 3px; gap: 5px; }
.unitcol select { width: 81px; height: 20px; margin: 1px 0 1px 4px; padding-left: 4px; border: 1px solid #a9bbd3; appearance: none; display: block;
  background: linear-gradient(45deg, transparent 50%, #56657c 50%) 70px 8px / 3px 3px no-repeat, linear-gradient(315deg, transparent 50%, #56657c 50%) 73px 8px / 3px 3px no-repeat, #edf3fc; }
.launcher { position: absolute; right: 7px; top: 5px; }
.launcher svg { width: 8px; height: 8px; fill: none; stroke: #6d82a3; }

.main { display: flex; flex: 1; min-height: 0; background: linear-gradient(#cfdded, #c5d6ee 20px, #c2d3ec); }
.side { display: flex; flex-direction: column; width: 197px; border-right: 1px solid #8ba3c6; border-left: 1px solid #8ba3c6; }
.sidehead { display: flex; justify-content: space-between; align-items: center; height: 27px; padding: 3px 5px 0 7px; }
.sidehead h2 { margin: 0; font-size: 12px; font-weight: 500; }
.sidehead svg { width: 10px; height: 10px; fill: none; stroke: #4f6585; stroke-width: 1.2; }
.filter { height: 25px; padding-left: 4px; border: 1px solid #8ba3c6; border-width: 1px 0; color: #222; appearance: none;
  background: linear-gradient(45deg, transparent 50%, #35517b 50%) right 6px top 10px / 3px 3px no-repeat, linear-gradient(315deg, transparent 50%, #35517b 50%) right 3px top 10px / 3px 3px no-repeat, linear-gradient(#8ba3c6, #8ba3c6) right 12px top / 1px 100% no-repeat, linear-gradient(#dbe7f7, #dbe7f7) right top / 12px 100% no-repeat, #fff; }
.treebox { display: flex; flex: 1; min-height: 0; overflow: hidden; background: #fff; color: #111; border-bottom: 1px solid #7089ae; }
.tree { flex: 1; margin: 0; padding: 1px 2px 0 3px; list-style: none; }
.tree li { display: flex; align-items: center; height: 19px; }
.tree .level1 { padding-left: 17px; }
.arrow { width: 16px; display: flex; justify-content: center; }
.arrow svg { width: 10px; height: 10px; }
.node { position: relative; display: flex; flex: 1; align-items: center; gap: 3px; height: 19px; padding: 0 2px; border: 1px solid transparent; border-radius: 2px; color: inherit; text-decoration: none; }
.node.hover { border-color: #d2e3f8; background: linear-gradient(#fbfdff, #edf4fd); }
.node.selected { border-color: #91b5e2; background: linear-gradient(#eaf2fc, #d4e4f8); }
.busy { position: absolute; left: 31px; top: -2px; width: 21px; height: 21px; border: 5px solid #2f91dc; border-radius: 50%; }
.scroll { display: flex; flex-direction: column; width: 15px; margin-right: 1px; background: #eee; }
.sbtn { display: flex; align-items: center; justify-content: center; height: 17px; }
.up { border: 4px solid transparent; border-top: 0; border-bottom-color: #777; }
.thumb { flex: 212; display: flex; align-items: center; justify-content: center; border: 1px solid #8c9097; border-radius: 2px; background: linear-gradient(90deg, #f6f6f6, #dcdddf 55%, #c6c8cb); }
.thumb i { width: 7px; height: 8px; background: repeating-linear-gradient(#555 0 1px, transparent 1px 3px); }
.rest { flex: 97; }
.splitter { height: 5px; margin-top: 1px; border: 1px solid #9eb6d8; border-width: 1px 0; background: #d7e4f5; }
.envs button { width: 100%; height: 33px; justify-content: flex-start; gap: 4px; padding-left: 4px; font-weight: 500; }
.envs svg { width: 24px; height: 24px; }
.envs .on { height: 32px; border: 1px solid #5a7da9; padding-left: 3px; background: linear-gradient(#ffd9ab, #ffbf77 35%, #fda33a 40%, #ffc768 90%, #ffe09a); box-shadow: inset 0 0 0 1px #ffe0b0; }
.envmore { display: flex; justify-content: flex-end; align-items: center; height: 32px; padding: 0 7px 4px 0; }
.work { display: flex; flex-direction: column; flex: 1; min-width: 0; padding: 2px 0 1px 4px; }
.doctabs { display: flex; align-items: flex-end; height: 18px; padding-left: 6px; }
.slant { width: 14px; height: 18px; }
.doctab { display: flex; align-items: center; gap: 6px; height: 18px; padding: 0 8px 0 1px; color: #111; font-weight: 500; background: #c3d4ec; border: 1px solid #8ba2c6; border-width: 1px 1px 0 0; border-radius: 0 3px 0 0; }
.doctab svg { width: 8px; height: 8px; stroke: #8392a9; }
.plus { width: 13px; height: 14px; margin: 0 0 2px 4px; background: #f3f7fd; border: 1px solid #e0e8f4; }
.plus svg { width: 11px; height: 11px; stroke: #333; stroke-width: 1.5; }
.end { margin: 0 1px 7px auto; }
.frame { flex: 1; display: flex; border: 1px solid #8ba2c6; border-radius: 3px; padding: 2px; background: #c9d9ef; }
.page { flex: 1; border: 1px solid #8799b8; outline: 2px solid #fff; outline-offset: 0; margin: 3px 2px 3px 3px; padding: 20px; background: linear-gradient(#f1f3ff, #e7f1fd 20%, #e2ecf9 50%, #d7e3f2); }
.actions { display: flex; width: 641px; height: 25px; border: 1px solid #85888b; border-radius: 8px; overflow: hidden; border-left: 2px solid #a9acaf; }
.actions button { flex: 1; color: #111; background: linear-gradient(#efefef, #e8e8e8 50%, #dadada 55%, #e6e6e6); border-right: 2px solid #7c7f82; }
.actions button:last-child { border-right: 0; }
.actions button:disabled { color: #8b8b8b; background: linear-gradient(#ededed, #e7e7e7 50%, #dedede 55%, #e6e6e6); }
table { width: 791px; margin-top: 8px; border: 1px solid #6584b4; border-collapse: separate; border-spacing: 0; table-layout: fixed; color: #111; background: #f2f5fb; }
.c0 { width: 24px; } .c1 { width: 96px; } .c2 { width: 80px; } .c3 { width: 250px; } .c4 { width: 89px; }
th { height: 29px; padding: 1px 4px 0 0; font-weight: 400; border-right: 1px solid #d3d6db; background: linear-gradient(#fff, #fdfdfe 50%, #f1f2f5); }
th:nth-child(2) { border-right-color: #a3a9b2; }
th:last-child { border-right: 0; }
th.corner { padding: 0; background: #ececf0; vertical-align: bottom; }
.corner i { display: block; width: 0; margin: 0 3px 3px auto; border: 5px solid #cacaca; border-left-color: transparent; border-top-color: transparent; }
td { height: 6px; padding: 0; }

.status { display: flex; align-items: center; height: 29px; padding: 0 1px 1px 3px; border-top: 1px solid #7891b5; background: linear-gradient(#dde7f3, #c6d3e4 60%, #b2c2d8); }
.warn { background: #fb2b35; color: #222; line-height: 17px; }
.check { width: 75px; height: 23px; margin: 0 auto 0 6px; border: 1px solid #747b85; border-radius: 3px; color: #111; background: linear-gradient(#f8f8f8, #e9eaeb 50%, #d8dadd); }
.grip { width: 7px; height: 23px; margin-right: 14px; border: 2px solid #98a9c1; border-width: 0 2px; }
.pct { width: 32px; margin-right: 16px; color: #4b5665; }
.zb svg { width: 16px; height: 16px; fill: none; stroke: #566577; stroke-width: 1.4; }
.zoom { appearance: none; width: 118px; height: 20px; margin: 0 6px 4px 5px; }
.zoom::-webkit-slider-runnable-track { height: 3px; background: #f1f2f3; border-bottom: 1px solid #a3afbf; }
.zoom::-webkit-slider-thumb { appearance: none; width: 10px; height: 18px; margin-top: -8px; border: 1px solid #747b85; border-radius: 2px 2px 5px 5px; background: linear-gradient(#fff, #dedfe1); }

.taskbar { display: flex; align-items: stretch; height: 40px; color: #fff; background: linear-gradient(90deg, #1e1d1d, #202020 35%, #302b2b 60%, #2d2b2b 66%, #2e3134); }
.start { width: 48px; }
.start svg { width: 17px; height: 17px; }
.find { display: flex; align-items: center; width: 344px; padding-left: 9px; gap: 9px; background: #f2f1f1; color: #333; font-size: 14px; }
.find svg { width: 22px; height: 22px; }
.find input { flex: 1; min-width: 0; height: 30px; }
.find input::placeholder { color: #333; opacity: 1; }
.sys { width: 48px; }
.sys svg { width: 22px; height: 22px; }
.apps { display: flex; padding-left: 3px; gap: 1px; }
.apps button { width: 48px; border-bottom: 2px solid transparent; border-top: 2px solid transparent; }
.apps svg { width: 24px; height: 24px; }
.apps .current { background: #615f5f; border-color: #615f5f #615f5f #76b2ea; }
.apps .open { width: 40px; margin-left: 4px; border-bottom-color: #76b2ea; }
.tray { display: flex; align-items: center; margin-left: auto; border-right: 1px solid #626466; margin-right: 2px; }
.tray button { width: 25px; height: 40px; }
.tray svg { width: 16px; height: 16px; }
.tray .ime { width: 28px; font-size: 16px; }
.time { display: flex; flex-direction: column; width: 68px; align-items: center; line-height: 19px; }
.tray .note { width: 51px; }
.tray .note svg { width: 26px; height: 26px; }
</style>
